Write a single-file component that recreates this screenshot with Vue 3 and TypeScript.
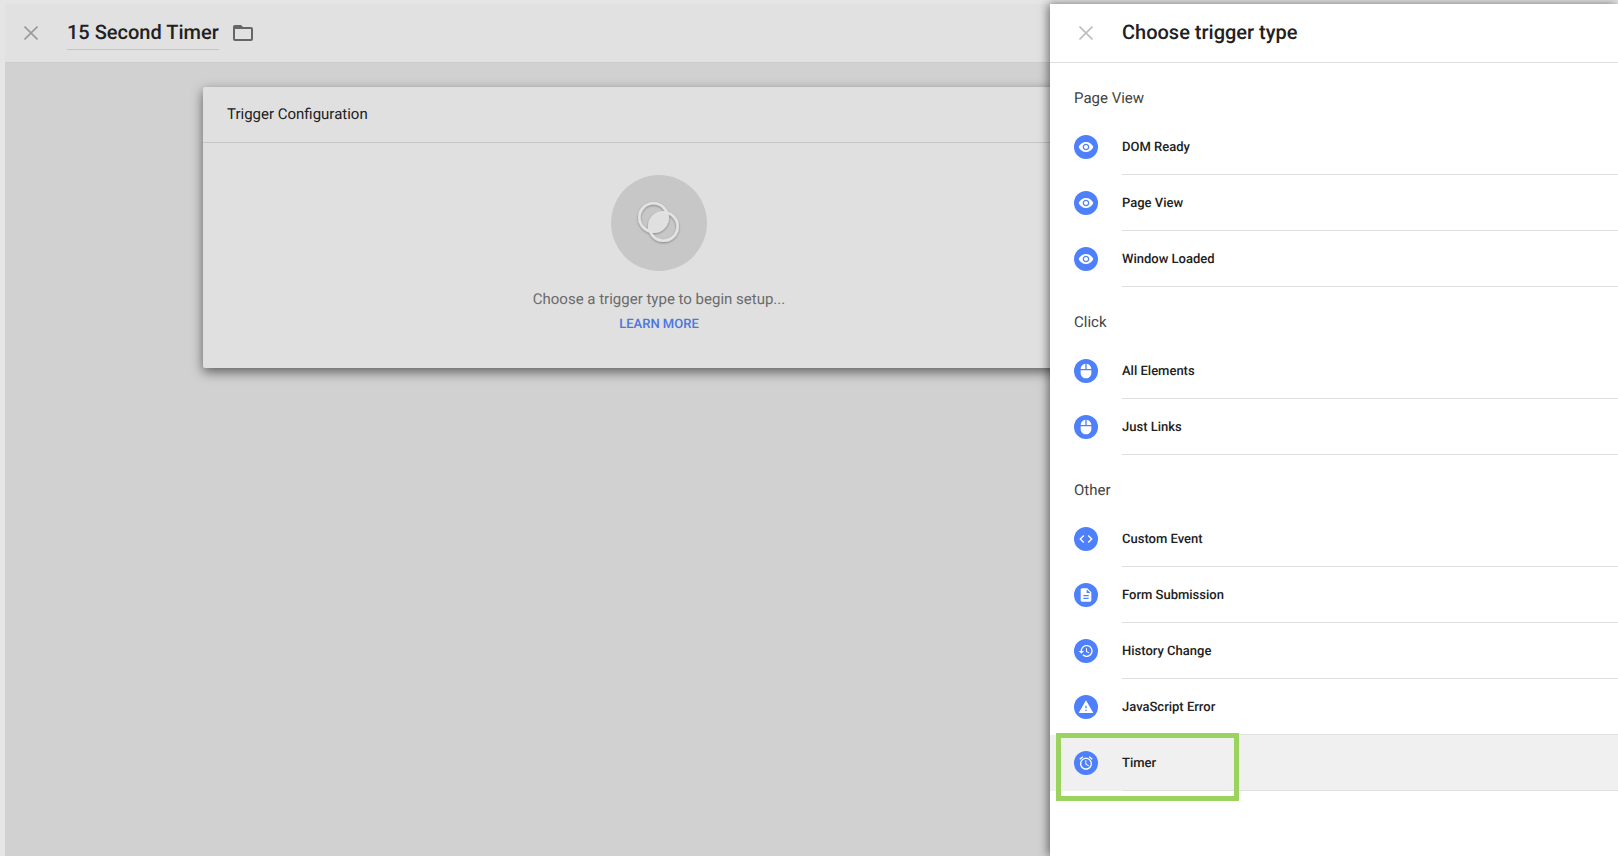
<script setup lang="ts">
const icons: Record<string, string> = {
  eye: "M12 4.5C7 4.5 2.73 7.61 1 12c1.73 4.39 6 7.5 11 7.5s9.27-3.11 11-7.5c-1.73-4.39-6-7.5-11-7.5zM12 17c-2.76 0-5-2.24-5-5s2.24-5 5-5 5 2.24 5 5-2.24 5-5 5zm0-8c-1.66 0-3 1.34-3 3s1.34 3 3 3 3-1.34 3-3-1.34-3-3-3z",
  mouse: "M13 1.07V9h7c0-4.08-3.05-7.44-7-7.93zM4 15c0 4.42 3.58 8 8 8s8-3.58 8-8v-4H4v4zm7-13.93C7.05 1.56 4 4.92 4 9h7V1.07z",
  code: "M9.4 16.6L4.8 12l4.6-4.6L8 6l-6 6 6 6 1.4-1.4zm5.2 0l4.6-4.6-4.6-4.6L16 6l6 6-6 6-1.4-1.4z",
  form: "M14 2H6c-1.1 0-1.99.9-1.99 2L4 20c0 1.1.89 2 1.99 2H18c1.1 0 2-.9 2-2V8l-6-6zm2 16H8v-2h8v2zm0-4H8v-2h8v2zm-3-5V3.5L18.5 9H13z",
  history: "M13 3c-4.97 0-9 4.03-9 9H1l3.89 3.89.07.14L9 12H6c0-3.87 3.13-7 7-7s7 3.13 7 7-3.13 7-7 7c-1.93 0-3.68-.79-4.94-2.06l-1.42 1.42C8.27 19.99 10.51 21 13 21c4.97 0 9-4.03 9-9s-4.03-9-9-9zm-1 5v5l4.28 2.54.72-1.21-3.5-2.08V8H12z",
  warning: "M1 21h22L12 2 1 21zm12-3h-2v-2h2v2zm0-4h-2v-4h2v4z",
  alarm: "M22 5.72l-4.6-3.86-1.29 1.53 4.6 3.86L22 5.72zM7.88 3.39L6.6 1.86 2 5.71l1.29 1.53 4.59-3.85zM12.5 8H11v6l4.75 2.85.75-1.23-4-2.37V8zM12 4c-4.97 0-9 4.03-9 9s4.02 9 9 9c4.97 0 9-4.03 9-9s-4.03-9-9-9zm0 16c-3.87 0-7-3.13-7-7s3.13-7 7-7 7 3.13 7 7-3.13 7-7 7z",
};

const sections = [
  {
    title: "Page View",
    items: [
      { name: "DOM Ready", icon: "eye" },
      { name: "Page View", icon: "eye" },
      { name: "Window Loaded", icon: "eye" },
    ],
  },
  {
    title: "Click",
    items: [
      { name: "All Elements", icon: "mouse" },
      { name: "Just Links", icon: "mouse" },
    ],
  },
  {
    title: "Other",
    items: [
      { name: "Custom Event", icon: "code" },
      { name: "Form Submission", icon: "form" },
      { name: "History Change", icon: "history" },
      { name: "JavaScript Error", icon: "warning" },
      { name: "Timer", icon: "alarm" },
    ],
  },
];
</script>

<template>
  <div class="screen">
    <div class="editor">
      <header class="topbar">
        <svg class="close close-dim" viewBox="0 0 14 14" width="14" height="14">
          <path d="M0.5 0.5L13.5 13.5M13.5 0.5L0.5 13.5" />
        </svg>
        <span class="name">15 Second Timer</span>
        <svg class="folder" viewBox="0 0 24 24" width="24" height="24">
          <path d="M20 6h-8l-2-2H4c-1.1 0-1.99.9-1.99 2L2 18c0 1.1.9 2 2 2h16c1.1 0 2-.9 2-2V8c0-1.1-.9-2-2-2zm0 12H4V8h16v10z" />
        </svg>
      </header>
      <section class="card">
        <div class="card-head">Trigger Configuration</div>
        <div class="card-body">
          <div class="placeholder">
            <svg viewBox="0 0 40 40" width="40" height="40">
              <defs>
                <filter id="soft" x="-30%" y="-30%" width="160%" height="160%">
                  <feDropShadow dx="0" dy="1" stdDeviation="1.2" flood-color="#000" flood-opacity="0.35" />
                </filter>
                <clipPath id="lens">
                  <circle cx="14.5" cy="14.5" r="14.2" />
                </clipPath>
              </defs>
              <g filter="url(#soft)">
                <circle class="ring" cx="14.5" cy="14.5" r="14.2" />
                <circle class="ring" cx="24.5" cy="23.5" r="14.2" />
                <circle class="lens" cx="24.5" cy="23.5" r="14.2" clip-path="url(#lens)" />
              </g>
            </svg>
          </div>
          <p class="hint">Choose a trigger type to begin setup...</p>
          <a class="learn">LEARN MORE</a>
        </div>
      </section>
    </div>

    <aside class="panel">
      <header class="panel-head">
        <svg class="close" viewBox="0 0 14 14" width="14" height="14">
          <path d="M0.5 0.5L13.5 13.5M13.5 0.5L0.5 13.5" />
        </svg>
        <h2>Choose trigger type</h2>
      </header>
      <div v-for="section in sections" :key="section.title" class="group">
        <div class="group-title">{{ section.title }}</div>
        <div
          v-for="item in section.items"
          :key="item.name"
          class="row"
          :class="{ active: item.name === 'Timer' }"
        >
          <span class="badge">
            <svg viewBox="0 0 24 24" width="16" height="16"><path :d="icons[item.icon]" /></svg>
          </span>
          <span class="row-label">{{ item.name }}</span>
          <span v-if="item.name === 'Timer'" class="callout"></span>
        </div>
      </div>
    </aside>
  </div>
</template>

<style>
html,
body {
  margin: 0;
  overflow: hidden;
}
</style>

<style scoped>
.screen {
  position: relative;
  width: 1618px;
  height: 856px;
  box-sizing: border-box;
  padding: 4px 0 0 5px;
  background: #e5e5e5;
  overflow: hidden;
  font-family: Roboto, "Liberation Sans", sans-serif;
  text-rendering: geometricPrecision;
  color: #212121;
}
.editor {
  height: 852px;
  background: #d1d1d1;
}
.topbar {
  display: flex;
  align-items: center;
  height: 59px;
  box-sizing: border-box;
  padding: 0 0 1px 19px;
  background: #e1e1e1;
  border-bottom: 1px solid #cdcdcd;
}
.close {
  flex: none;
  fill: none;
  stroke: #bdbdbd;
  stroke-width: 1.6;
}
.close-dim {
  stroke: #9a9a9a;
}
.name {
  margin-left: 29px;
  width: 152px;
  height: 34px;
  box-sizing: border-box;
  border-bottom: 1px solid #c4c4c4;
  font-size: 20px;
  line-height: 32px;
  font-weight: 500;
  white-space: nowrap;
}
.folder {
  margin-left: 12px;
  fill: #666;
}
.card {
  width: 912px;
  height: 281px;
  margin: 24px 0 0 198px;
  background: #e0e0e0;
  border-radius: 2px;
  box-shadow: 0 4px 12px rgba(0, 0, 0, 0.55);
}
.card-head {
  height: 56px;
  box-sizing: border-box;
  padding-left: 24px;
  border-bottom: 1px solid #c6c6c6;
  font-size: 15px;
  line-height: 54px;
}
.card-body {
  display: flex;
  flex-direction: column;
  align-items: center;
  padding-top: 32px;
}
.placeholder {
  display: flex;
  align-items: center;
  justify-content: center;
  width: 96px;
  height: 96px;
  border-radius: 50%;
  background: #c7c7c7;
}
.placeholder svg {
  overflow: visible;
}
.ring {
  fill: none;
  stroke: #e3e3e3;
  stroke-width: 2.6;
}
.lens {
  fill: #e0e0e0;
}
.hint {
  margin: 18px 0 0;
  font-size: 15px;
  line-height: 20px;
  color: #6b6b6b;
}
.learn {
  margin-top: 6px;
  font-size: 13px;
  line-height: 20px;
  font-weight: 500;
  color: #4a76e0;
}
.panel {
  position: absolute;
  top: 4px;
  right: 0;
  bottom: 0;
  width: 568px;
  background: #fff;
  box-shadow: -2px 0 9px rgba(0, 0, 0, 0.5);
}
.panel-head {
  display: flex;
  align-items: center;
  height: 59px;
  box-sizing: border-box;
  padding: 0 0 1px 29px;
  border-bottom: 1px solid #e0e0e0;
}
.panel-head h2 {
  margin: 0 0 2px 29px;
  font-size: 20px;
  font-weight: 500;
}
.group-title {
  height: 56px;
  box-sizing: border-box;
  padding: 25px 0 0 24px;
  font-size: 15px;
  line-height: 20px;
  color: #424242;
}
.row {
  position: relative;
  display: flex;
  align-items: center;
  height: 56px;
  padding-left: 24px;
}
.row.active {
  background: #f0f0f0;
}
.badge {
  flex: none;
  display: flex;
  align-items: center;
  justify-content: center;
  width: 24px;
  height: 24px;
  border-radius: 50%;
  background: #4f80fb;
}
.badge svg {
  fill: #fff;
}
.row-label {
  flex: 1;
  align-self: stretch;
  box-sizing: border-box;
  margin-left: 24px;
  border-bottom: 1px solid #e0e0e0;
  font-size: 13px;
  font-weight: 500;
  line-height: 57px;
}
.callout {
  position: absolute;
  left: 6px;
  top: -2px;
  width: 183px;
  height: 68px;
  box-sizing: border-box;
  border: 5px solid #9ad45f;
}
</style>
